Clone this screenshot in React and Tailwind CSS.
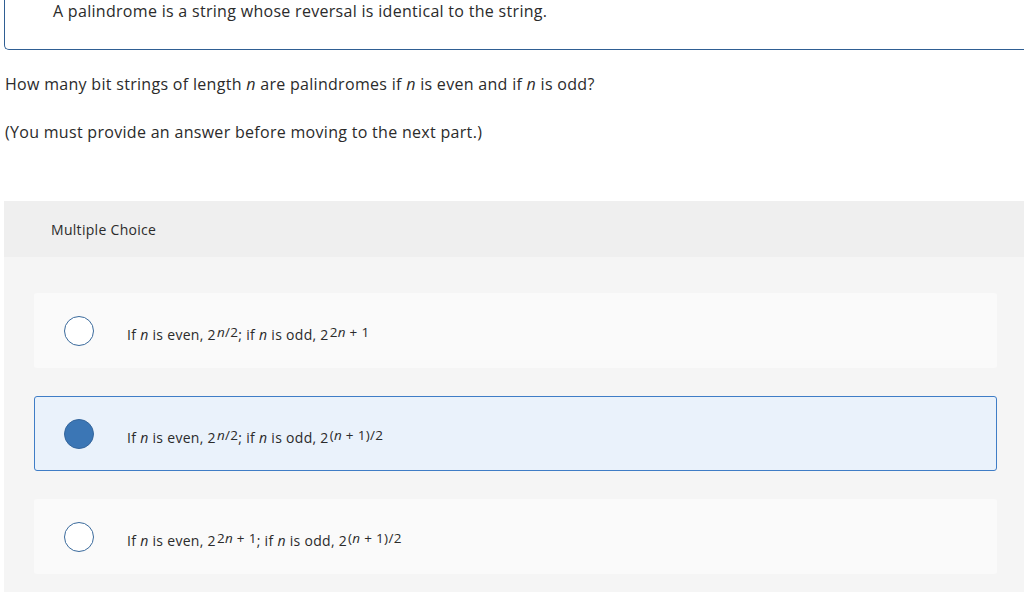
import React from "react";

const N = () => <i>n</i>;
const Sup = ({ children }) => (
  <sup className="text-[13.5px] relative top-[-3px] ml-[1px]">{children}</sup>
);

function Choice({ selected, children }) {
  return (
    <div
      className={
        "h-[75px] flex items-center pl-[29px] rounded-[3px] " +
        (selected
          ? "bg-[#eaf2fb] border border-[#3f7dc6]"
          : "bg-[#fafafa] border border-transparent")
      }
    >
      <div
        className={
          "w-[30px] h-[30px] rounded-full shrink-0 " +
          (selected
            ? "bg-[#3b76b5] border border-[#35669c]"
            : "bg-white border-[1.5px] border-[#3a6a9c]")
        }
      />
      <div className="ml-[33px] text-[14px] leading-[20px] tracking-[0.3px] text-[#2b2b2b] pt-[8px]">{children}</div>
    </div>
  );
}

export default function App() {
  return (
    <div className="w-[1024px] h-[592px] overflow-hidden bg-white font-['Open_Sans',Arial,sans-serif] text-[#2b2b2b] tracking-[0.3px]">
      <div className="ml-[4px] h-[50px] border-l-[1.5px] border-b-[1.5px] border-[#2f5e93] rounded-bl-[5px] pl-[48px]">
        <p className="text-[16px] leading-[22px]">
          A palindrome is a string whose reversal is identical to the string.
        </p>
      </div>
      <p className="mt-[22px] ml-[5px] text-[16px] leading-[24px]">
        How many bit strings of length <N /> are palindromes if <N /> is even and if <N /> is odd?
      </p>
      <p className="mt-[24px] ml-[5px] text-[16px] leading-[24px]">
        (You must provide an answer before moving to the next part.)
      </p>
      <div className="mt-[57px] ml-[4px] bg-[#f5f5f5] h-[400px]">
        <div className="h-[56px] bg-[#efefef] flex items-center pl-[47px] text-[14px]">
          Multiple Choice
        </div>
        <div className="pt-[36px] pl-[30px] pr-[27px] flex flex-col gap-[28px]">
          <Choice>
            If <N /> is even, 2<Sup><N />/2</Sup>; if <N /> is odd, 2<Sup>2<N /> + 1</Sup>
          </Choice>
          <Choice selected>
            If <N /> is even, 2<Sup><N />/2</Sup>; if <N /> is odd, 2<Sup>(<N /> + 1)/2</Sup>
          </Choice>
          <Choice>
            If <N /> is even, 2<Sup>2<N /> + 1</Sup>; if <N /> is odd, 2<Sup>(<N /> + 1)/2</Sup>
          </Choice>
        </div>
      </div>
    </div>
  );
}
